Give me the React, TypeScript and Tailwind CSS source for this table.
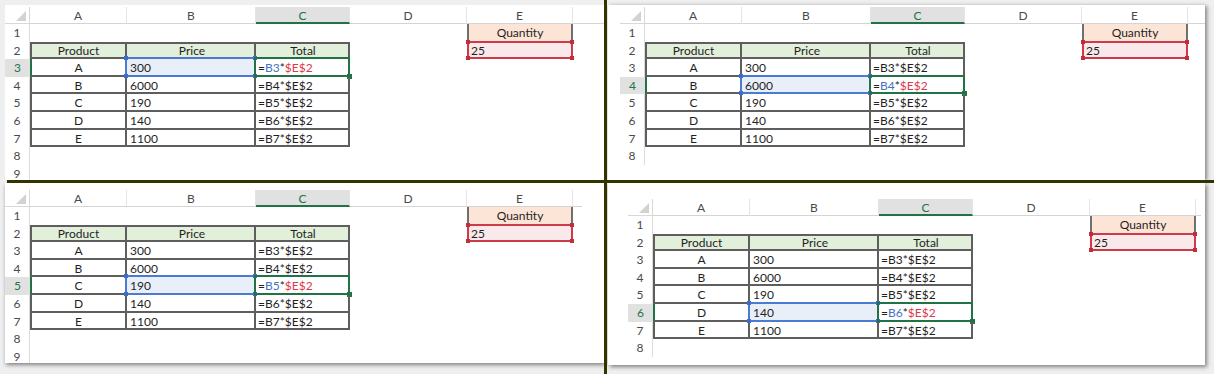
import React from 'react';

const items = [
  { p: 'A', price: '300' },
  { p: 'B', price: '6000' },
  { p: 'C', price: '190' },
  { p: 'D', price: '140' },
  { p: 'E', price: '1100' },
];

const font = { fontFamily: 'Lato, "Open Sans", Arial, sans-serif' };

function Head({ w, label, active }: { w: string; label: string; active?: boolean }) {
  return (
    <div
      className={`${w} shrink-0 text-center pt-[3px] leading-[12px] text-[12px] border-r border-r-[#e4e4e4] ${
        active ? 'bg-[#e1e1e1] text-[#217346] border-b-2 border-b-[#217346]' : 'text-[#4a4a4a] border-b border-b-[#d4d4d4]'
      }`}
    >
      {label}
    </div>
  );
}

function Row({ r, sel, fw }: { r: number; sel: number; fw: string }) {
  const isSel = r === sel;
  const inTable = r >= 2 && r <= 7;
  const item = items[r - 3];
  const grid = inTable ? `border-b-2 border-r-2 border-[#5e5e5e] ${r === 2 ? 'border-t-2' : ''}` : '';
  const head = r === 2 ? 'bg-[#e2efda]' : '';
  const txt = `${r === 2 ? 'pt-[1px]' : 'pt-[3px]'} leading-[12px] text-[12px] text-[#1f1f1f]`;

  return (
    <div className="flex h-[17.6px] shrink-0">
      <div
        className={`w-[25px] shrink-0 text-center pt-[3px] leading-[12px] text-[12px] ${
          isSel ? 'bg-[#e1e1e1] text-[#217346]' : 'text-[#4a4a4a] border-r border-r-[#dcdcdc]'
        }`}
      >
        {r}
      </div>

      <div
        className={`w-[97px] shrink-0 text-center ${txt} ${grid} ${head} ${
          inTable ? (isSel ? 'border-l-2 border-l-[#217346]' : 'border-l-2') : ''
        }`}
      >
        {r === 2 ? 'Product' : item ? item.p : ''}
      </div>

      <div className={`relative w-[129px] shrink-0 pl-[3px] ${txt} ${grid} ${head} ${isSel ? 'bg-[#e9eff9]' : ''} ${r === 2 ? 'text-center' : ''}`}>
        {r === 2 ? 'Price' : item ? item.price : ''}
        {isSel && (
          <div className="absolute -inset-[2px] border-2 border-[#4a7bd0]">
            <span className="absolute -top-[3px] -left-[3px] w-[4px] h-[4px] bg-[#3b6fcb]" />
            <span className="absolute -top-[3px] -right-[3px] w-[4px] h-[4px] bg-[#3b6fcb]" />
            <span className="absolute -bottom-[3px] -left-[3px] w-[4px] h-[4px] bg-[#3b6fcb]" />
            <span className="absolute -bottom-[3px] -right-[3px] w-[4px] h-[4px] bg-[#3b6fcb]" />
          </div>
        )}
      </div>

      <div className={`relative w-[94px] shrink-0 pl-[2px] ${txt} ${grid} ${head} ${r === 2 ? 'text-center' : ''}`}>
        {r === 2 ? (
          'Total'
        ) : item ? (
          isSel ? (
            <>
              =<span className="text-[#4472c4]">B{r}</span>*<span className="text-[#e0374a]">$E$2</span>
            </>
          ) : (
            `=B${r}*$E$2`
          )
        ) : (
          ''
        )}
        {isSel && (
          <div className="absolute -inset-[2px] border-2 border-[#217346]">
            <span className="absolute -bottom-[4px] -right-[4px] w-[5px] h-[5px] bg-[#217346]" />
          </div>
        )}
      </div>

      <div className="w-[117px] shrink-0" />

      {r === 1 ? (
        <div className={`w-[106px] shrink-0 text-center bg-[#fce4d6] border-l-2 border-r-2 border-[#6f6f6f] ${txt}`}>Quantity</div>
      ) : r === 2 ? (
        <div className="relative w-[106px] shrink-0 pl-[4px] pt-[3px] leading-[12px] text-[12px] text-[#1f1f1f] bg-[#f9e9ea]">
          25
          <div className="absolute -top-[1px] inset-x-0 bottom-0 border-2 border-[#cf3a4a]">
            <span className="absolute -top-[3px] -left-[3px] w-[4px] h-[4px] bg-[#c42b3c]" />
            <span className="absolute -top-[3px] -right-[3px] w-[4px] h-[4px] bg-[#c42b3c]" />
            <span className="absolute -bottom-[3px] -left-[3px] w-[4px] h-[4px] bg-[#c42b3c]" />
            <span className="absolute -bottom-[3px] -right-[3px] w-[4px] h-[4px] bg-[#c42b3c]" />
          </div>
        </div>
      ) : (
        <div className="w-[106px] shrink-0" />
      )}

      <div className={`${fw} shrink-0`} />
    </div>
  );
}

function Sheet({ sel, rows, pad, fw }: { sel: number; rows: number; pad: string; fw: string }) {
  const nums = Array.from({ length: rows }, (_, i) => i + 1);
  return (
    <div className={`flex flex-col ${pad}`}>
      <div className="flex h-[17px] shrink-0">
        <div className="relative w-[25px] shrink-0 border-r border-b border-[#d8d8d8]">
          <svg className="absolute right-[3px] bottom-[2px]" width="10" height="10" viewBox="0 0 10 10">
            <polygon points="10,0 10,10 0,10" fill="#d2d2d2" />
          </svg>
        </div>
        <Head w="w-[97px]" label="A" />
        <Head w="w-[129px]" label="B" />
        <Head w="w-[94px]" label="C" active />
        <Head w="w-[117px]" label="D" />
        <Head w="w-[106px]" label="E" />
        <div className={`${fw} shrink-0 border-b border-b-[#d4d4d4]`} />
      </div>
      {nums.map((r) => (
        <Row key={r} r={r} sel={sel} fw={fw} />
      ))}
    </div>
  );
}

export default function App() {
  return (
    <div className="w-[1214px] h-[374px] bg-[#efefef] overflow-hidden grid grid-cols-[604px_3px_607px] grid-rows-[180px_3px_191px]" style={font}>
      <div className="col-start-1 row-start-1 pl-[5px] pt-[5px]">
        <div className="w-[599px] h-[175px] bg-white overflow-hidden">
          <Sheet sel={3} rows={9} pad="pt-[2px]" fw="w-[31px]" />
        </div>
      </div>

      <div className="col-start-3 row-start-1 pl-[1px] pt-[5px]">
        <div className="w-[597px] h-[175px] bg-white overflow-hidden shadow-[2px_1px_4px_rgba(0,0,0,0.45)]">
          <Sheet sel={4} rows={8} pad="pt-[2px] pl-[12px]" fw="w-[17px]" />
        </div>
      </div>

      <div className="col-start-1 row-start-3 pl-[5px]">
        <div className="w-[599px] h-[180px] bg-white overflow-hidden shadow-[1px_2px_4px_rgba(0,0,0,0.45)]">
          <Sheet sel={5} rows={9} pad="pt-[7px]" fw="w-[9px]" />
        </div>
      </div>

      <div className="col-start-3 row-start-3 pl-[1px]">
        <div className="w-[597px] h-[182px] bg-white overflow-hidden shadow-[2px_2px_4px_rgba(0,0,0,0.45)]">
          <Sheet sel={6} rows={8} pad="pt-[16px] pl-[20px]" fw="w-[5px]" />
        </div>
      </div>

      <div className="col-start-2 row-start-1 row-span-3 bg-[#333300] z-10" />
      <div className="col-start-1 col-span-3 row-start-2 ml-[7px] bg-[#333300] z-10" />
    </div>
  );
}
